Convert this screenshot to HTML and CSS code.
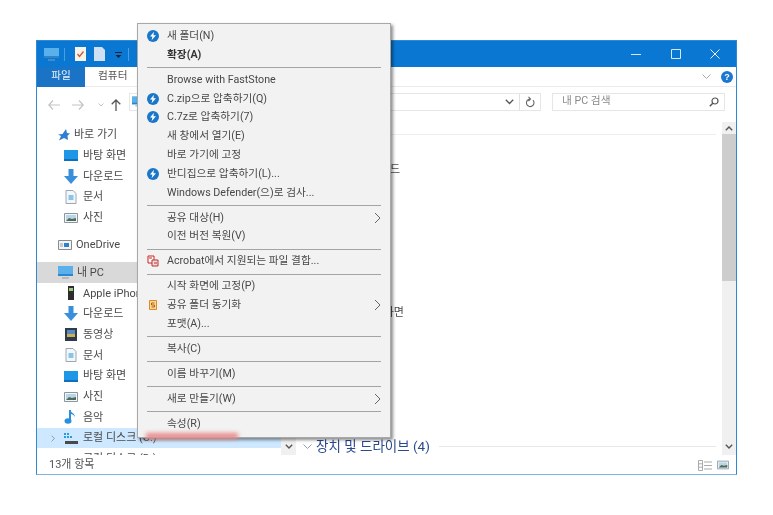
FILE: index.html
```html
<!DOCTYPE html>
<html lang="ko">
<head>
<meta charset="utf-8">
<title>내 PC</title>
<link rel="stylesheet" href="styles.css">
</head>
<body>
<svg class="defs" width="0" height="0">
  <symbol id="bz" viewBox="0 0 12 12"><circle cx="6" cy="6" r="6" fill="#1976c9"/><path d="M7 1.800 3 6.600h2.400L4.600 10.200 9 5.200H6.400z" fill="#fff"/></symbol>
  <symbol id="monitor" viewBox="0 0 15 13"><path d="M0 0h15v10H0z" fill="#5ab0ea"/><path d="M0 8h15v2H0z" fill="#2b86cf"/><path d="M4 11.500h7v1H4z" fill="#8a9aa8"/></symbol>
  <symbol id="desktop" viewBox="0 0 14 11"><path d="M0 0h14v11H0z" fill="#1f97e6"/><path d="M0 9h14v2H0z" fill="#0f6fb8"/></symbol>
  <symbol id="down" viewBox="0 0 14 15"><path d="M4.500 0h5v7H14l-7 8-7-8h4.500z" fill="#3a8fdc"/></symbol>
  <symbol id="doc" viewBox="0 0 11 14"><path d="M.5.500h7l3 3v10H.5z" fill="#f4f7fa" stroke="#9aa8b4"/><path d="M3 5h5v5H3z" fill="#8cc4e8"/></symbol>
  <symbol id="pic" viewBox="0 0 14 10"><path d="M.5.500h13v9H.500z" fill="#f6f6f6" stroke="#8a97a3"/><path d="M2 2h10v6H2z" fill="#b9d5e8"/><path d="M2 8l3-3 3 1 4-1v3z" fill="#4d6b57"/></symbol>
  <symbol id="chev" viewBox="0 0 7 12"><path d="M1 1l5 5-5 5" fill="none" stroke="#666" stroke-width="1"/></symbol>
</svg>

<div class="window">
  <header class="titlebar">
    <svg class="tb-mon" width="15" height="13"><use href="#monitor"/></svg>
    <span class="tb-sep"></span>
    <svg class="tb-doc" width="11" height="14" viewBox="0 0 11 14"><path d="M0 0h11v14H0z" fill="#f7f3ea"/><path d="M2.500 7l2 2.500 4-5" fill="none" stroke="#d2552b" stroke-width="1.300"/></svg>
    <svg class="tb-doc" width="11" height="14" viewBox="0 0 11 14"><path d="M0 0h8l3 3v11H0z" fill="#cfe0f2"/></svg>
    <svg class="tb-drop" width="7" height="6" viewBox="0 0 7 6"><path d="M0 0h7v1H0zM.5 3h6L3.500 6z" fill="#10233a"/></svg>
    <span class="tb-sep"></span>
    <span class="tb-title">내 PC</span>
    <div class="win-btns">
      <svg width="10" height="10" viewBox="0 0 10 10"><path d="M0 5.500h10" stroke="#d6e8f6"/></svg>
      <svg width="10" height="10" viewBox="0 0 10 10"><path d="M.5.500h9v9h-9z" fill="none" stroke="#d6e8f6"/></svg>
      <svg width="10" height="10" viewBox="0 0 10 10"><path d="M.5.500l9 9M9.500.500l-9 9" stroke="#e6f1fa"/></svg>
    </div>
  </header>

  <nav class="tabs">
    <span class="tab-file">파일</span>
    <span class="tab">컴퓨터</span>
    <span class="tabs-end">
      <svg width="9" height="5" viewBox="0 0 9 5"><path d="M.5.500l4 4 4-4" fill="none" stroke="#a8a8a8"/></svg>
      <span class="help">?</span>
    </span>
  </nav>

  <div class="addressbar">
    <svg class="nav-arrow" width="12" height="10" viewBox="0 0 12 10"><path d="M5 .500.8 5 5 9.500M1 5h11" fill="none" stroke="#c4c4c4" stroke-width="1.200"/></svg>
    <svg class="nav-arrow" width="12" height="10" viewBox="0 0 12 10"><path d="M7 .500 11.200 5 7 9.500M11 5H0" fill="none" stroke="#c4c4c4" stroke-width="1.200"/></svg>
    <svg class="nav-mini" width="6" height="4" viewBox="0 0 6 4"><path d="M.5.500l2.500 2.500L5.500.500" fill="none" stroke="#c4c4c4"/></svg>
    <svg class="nav-up" width="10" height="12" viewBox="0 0 10 12"><path d="M.7 5.300 5 1l4.300 4.300M5 1v11" fill="none" stroke="#555" stroke-width="1.300"/></svg>
    <div class="addr">
      <svg width="12" height="11"><use href="#monitor"/></svg>
      <span class="addr-grow"></span>
      <svg width="9" height="6" viewBox="0 0 9 6"><path d="M.8.800l3.700 3.700L8.200.800" fill="none" stroke="#555" stroke-width="1.300"/></svg>
      <span class="addr-div"></span>
      <svg width="10" height="12" viewBox="0 0 10 12"><path d="M8 4.200a3.800 3.800 0 1 1-3-1.200M3.500 .800 5.500 3 3.500 5" fill="none" stroke="#666" stroke-width="1.100"/></svg>
    </div>
    <div class="search">
      <span>내 PC 검색</span>
      <svg width="10" height="10" viewBox="0 0 10 10"><circle cx="6" cy="4" r="3" fill="none" stroke="#555" stroke-width="1.200"/><path d="M3.800 6.200.8 9.200" stroke="#555" stroke-width="1.500"/></svg>
    </div>
  </div>

  <main class="main">
    <aside class="nav">
      <div class="tree">
        <div class="group">
          <div class="row lv0"><svg width="12" height="12" viewBox="0 0 12 12"><path d="M8 0l1 4 3 .500-2.500 2.300L10 11 6 9 1 11.500l2-4.500L0 5.500l4.500-.500z" fill="#2f7fd0"/></svg>바로 가기</div>
          <div class="row"><svg width="14" height="11"><use href="#desktop"/></svg>바탕 화면</div>
          <div class="row"><svg width="14" height="15"><use href="#down"/></svg>다운로드</div>
          <div class="row"><svg width="14" height="14"><use href="#doc"/></svg>문서</div>
          <div class="row"><svg width="14" height="10"><use href="#pic"/></svg>사진</div>
        </div>
        <div class="group">
          <div class="row lv0"><svg width="14" height="10" viewBox="0 0 14 10"><path d="M.5.500h13v9H.5z" fill="#f4f4f4" stroke="#8a8a8a"/><path d="M6 3h5v4H6z" fill="#2f7fd0"/><path d="M2 3h3v4H2z" fill="#bcd"/></svg>OneDrive</div>
        </div>
        <div class="group">
          <div class="row lv0 selected"><svg width="15" height="13"><use href="#monitor"/></svg>내 PC</div>
          <div class="row"><svg width="14" height="14" viewBox="0 0 14 14"><path d="M4 0h6v14H4z" fill="#2d2d2d"/><path d="M5 2h4v3H5z" fill="#9acb7a"/></svg>Apple iPhone</div>
          <div class="row"><svg width="14" height="15"><use href="#down"/></svg>다운로드</div>
          <div class="row"><svg width="14" height="13" viewBox="0 0 14 13"><path d="M1 0h12v13H1z" fill="#2f3a4a"/><path d="M3 2h8v7H3z" fill="#5b8ac0"/><path d="M3 6h8v3H3z" fill="#c9b25a"/></svg>동영상</div>
          <div class="row"><svg width="14" height="14"><use href="#doc"/></svg>문서</div>
          <div class="row"><svg width="14" height="11"><use href="#desktop"/></svg>바탕 화면</div>
          <div class="row"><svg width="14" height="10"><use href="#pic"/></svg>사진</div>
          <div class="row"><svg width="14" height="16" viewBox="0 0 14 16"><path d="M6 1v10.500" stroke="#2b8fdc" stroke-width="2"/><path d="M6 1c1 3 5 3 5 7-1-2-3-3-4-3z" fill="#2b8fdc"/><ellipse cx="4" cy="12" rx="3.500" ry="2.800" fill="#2b8fdc"/></svg>음악</div>
          <div class="row drive"><span class="expander"><svg width="4" height="7" viewBox="0 0 7 12"><use href="#chev"/></svg></span><svg width="14" height="12" viewBox="0 0 14 12"><path d="M1 9h13v3H1z" fill="#4a4a4a"/><path d="M0 1h2v2H0zM3 1h2v2H3zM0 4h2v2H0zM3 4h2v2H3zM6 4h2v2H6z" fill="#2b9be0"/></svg>로컬 디스크 (C:)</div>
          <div class="row"><svg width="14" height="12" viewBox="0 0 14 12"><path d="M0 8h14v4H0z" fill="#4a4a4a"/></svg>로컬 디스크 (D:)</div>
        </div>
      </div>
      <div class="nav-scroll">
        <svg width="8" height="5" viewBox="0 0 8 5"><path d="M.8.800 4 4 7.200.800" fill="none" stroke="#555" stroke-width="1.400"/></svg>
      </div>
    </aside>

    <section class="content">
      <div class="col-head"></div>
      <div class="tiles">
        <div class="tile tile-a">다운로드</div>
        <div class="tile tile-b">바탕 화면</div>
      </div>
      <div class="section-head">
        <svg width="9" height="5" viewBox="0 0 9 5"><path d="M.5.500l4 4 4-4" fill="none" stroke="#8d9db5"/></svg>
        <span>장치 및 드라이브 (4)</span>
        <i class="rule"></i>
      </div>
    </section>

    <div class="vscroll">
      <svg class="vs-btn" width="8" height="5" viewBox="0 0 8 5"><path d="M.8 4.200 4 1l3.200 3.200" fill="none" stroke="#555" stroke-width="1.400"/></svg>
      <div class="thumb"></div>
      <span class="vs-grow"></span>
      <svg class="vs-btn" width="8" height="5" viewBox="0 0 8 5"><path d="M.8.800 4 4 7.200.800" fill="none" stroke="#555" stroke-width="1.400"/></svg>
    </div>
  </main>

  <footer class="status">
    <span>13개 항목</span>
    <span class="view-btns">
      <svg width="14" height="11" viewBox="0 0 14 11"><path d="M.5.500h4v10h-4zM.5 3.800h4M.5 7.200h4" fill="none" stroke="#aaa"/><path d="M6 2h8M6 5.500h8M6 9h8" stroke="#aaa"/></svg>
      <svg class="view-on" width="12" height="10"><use href="#pic"/></svg>
    </span>
  </footer>
</div>

<div class="menu">
  <div class="mi"><svg width="12" height="12"><use href="#bz"/></svg><span>새 폴더(N)</span></div>
  <div class="mi strong"><span>확장(A)</span></div>
  <hr>
  <div class="mi"><span>Browse with FastStone</span></div>
  <div class="mi"><svg width="12" height="12"><use href="#bz"/></svg><span>C.zip으로 압축하기(Q)</span></div>
  <div class="mi"><svg width="12" height="12"><use href="#bz"/></svg><span>C.7z로 압축하기(7)</span></div>
  <div class="mi"><span>새 창에서 열기(E)</span></div>
  <div class="mi"><span>바로 가기에 고정</span></div>
  <div class="mi"><svg width="12" height="12"><use href="#bz"/></svg><span>반디집으로 압축하기(L)...</span></div>
  <div class="mi"><span>Windows Defender(으)로 검사...</span></div>
  <hr>
  <div class="mi"><span>공유 대상(H)</span><svg class="sub" width="7" height="12"><use href="#chev"/></svg></div>
  <div class="mi"><span>이전 버전 복원(V)</span></div>
  <hr>
  <div class="mi"><svg width="12" height="12" viewBox="0 0 12 12"><path d="M1 1h6v7H1z" fill="#fff" stroke="#c22"/><path d="M5 5h6v6H5z" fill="#f0dede" stroke="#b33"/><path d="M2 3h3M7 8h3" stroke="#c22"/></svg><span>Acrobat에서 지원되는 파일 결합...</span></div>
  <hr>
  <div class="mi"><span>시작 화면에 고정(P)</span></div>
  <div class="mi"><svg width="12" height="12" viewBox="0 0 12 12"><path d="M2.500 1.500h7v9h-7z" fill="#f7d9a8" stroke="#e08a1e"/><path d="M7.500 4H4.500v2h3v2h-3" fill="none" stroke="#b85f00"/></svg><span>공유 폴더 동기화</span><svg class="sub" width="7" height="12"><use href="#chev"/></svg></div>
  <div class="mi"><span>포맷(A)...</span></div>
  <hr>
  <div class="mi"><span>복사(C)</span></div>
  <hr>
  <div class="mi"><span>이름 바꾸기(M)</span></div>
  <hr>
  <div class="mi"><span>새로 만들기(W)</span><svg class="sub" width="7" height="12"><use href="#chev"/></svg></div>
  <hr>
  <div class="mi"><span>속성(R)</span></div>
  <div class="smear"></div>
</div>
</body>
</html>
```
FILE: styles.css
```css
* { box-sizing: border-box; }
html, body { margin: 0; height: 100%; background: #fff; }
body {
  position: relative;
  overflow: hidden;
  font: 10.700px/1.2 Roboto, "Noto Sans CJK KR", sans-serif;
  color: #4a4a4a;
  filter: blur(0.3px);
}
.defs { position: absolute; }
svg { display: block; flex: none; }

.window {
  width: 701px;
  height: 435px;
  margin: 40px 0 0 36px;
  display: flex;
  flex-direction: column;
  border: 1px solid #2f8ad6;
  border-bottom-color: #7fb2dc;
  background: #fff;
}

.titlebar {
  height: 26px;
  background: #0a78d2;
  display: flex;
  align-items: center;
  padding-left: 7px;
  flex: none;
}
.tb-mon { margin-right: 5px; }
.tb-sep { width: 1px; height: 13px; background: #4d9ee0; margin-right: 10px; }
.tb-doc { margin-right: 8px; }
.tb-drop { margin: 2px 6px 0 2px; }
.tb-title { color: #d6e8f6; font-size: 10px; }
.win-btns { margin-left: auto; display: flex; gap: 29.500px; padding-right: 16px; }

.tabs {
  height: 20px;
  display: flex;
  align-items: center;
  flex: none;
  border-bottom: 1px solid #eaeaea;
}
.tab-file {
  width: 48px;
  height: 20px;
  background: #1a73c4;
  color: #e8f2fa;
  display: flex;
  align-items: center;
  justify-content: center;
}
.tab { margin-left: 13px; color: #555; }
.tabs-end { margin-left: auto; display: flex; align-items: center; gap: 10px; padding-right: 3px; }
.help {
  width: 12px;
  height: 12px;
  border-radius: 50%;
  background: #1a78d0;
  color: #fff;
  font: bold 9px/12px "Liberation Sans", sans-serif;
  text-align: center;
}

.addressbar {
  height: 35px;
  display: flex;
  align-items: center;
  padding: 0 11px 0 11px;
  flex: none;
}
.nav-arrow { margin-right: 12px; }
.nav-mini { margin: 0 7px 0 2px; }
.nav-up { margin-right: 8px; }
.addr {
  width: 412px;
  height: 18px;
  margin: -6px 11px 0 0;
  padding: 0 5px 0 2px;
  border: 1px solid #e6e6e6;
  display: flex;
  align-items: center;
}
.addr-grow { flex: 1; }
.addr-div { width: 1px; height: 16px; background: #e0e0e0; margin: 0 5px; }
.search {
  width: 173px;
  height: 18px;
  margin-top: -6px;
  padding: 0 5px 0 9px;
  border: 1px solid #e6e6e6;
  display: flex;
  align-items: center;
  justify-content: space-between;
  color: #8a8a8a;
}

.main { flex: 1; min-height: 0; display: flex; overflow: hidden; }

.nav { width: 259px; flex: none; display: flex; overflow: hidden; }
.tree { width: 244px; flex: none; padding-top: 2.500px; font-size: 11px; }
.group + .group { margin-top: 6.800px; }
.row {
  height: 20.700px;
  display: flex;
  align-items: center;
  gap: 5px;
  padding-left: 27px;
  white-space: nowrap;
}
.row.lv0 { padding-left: 21px; gap: 4px; }
.row.selected { background: #d9d9d9; }
.row.drive { background: #cde8ff; position: relative; }
.expander { position: absolute; left: 14px; top: 7px; }
.nav-scroll {
  width: 15px;
  display: flex;
  align-items: flex-end;
  justify-content: center;
  padding-bottom: 6px;
  background: #f0f0f0;
}

.content { flex: 1; min-width: 0; display: flex; flex-direction: column; padding-right: 6px; }
.col-head { height: 13px; border-bottom: 1px solid #eee; flex: none; }
.tiles { flex: 1; font-size: 11px; }
.tile { width: 104px; text-align: right; }
.tile-a { margin-top: 28px; }
.tile-b { margin-top: 130px; width: 108px; }
.section-head {
  display: flex;
  align-items: center;
  height: 18px;
  padding-left: 7px;
  color: #2a4a8e;
  font-size: 13.500px;
  gap: 4px;
  flex: none;
}
.rule { flex: 1; height: 1px; background: #e8e8e8; margin-left: 5px; }

.vscroll {
  width: 14px;
  flex: none;
  background: #f0f0f0;
  display: flex;
  flex-direction: column;
  align-items: center;
}
.vs-btn { margin: 4px 0 6px; }
.thumb { width: 14px; height: 147px; background: #cdcdcd; margin-top: -3px; }
.vs-grow { flex: 1; }

.status {
  height: 19px;
  flex: none;
  display: flex;
  align-items: center;
  justify-content: space-between;
  padding: 1px 7px 0 12px;
  font-size: 11px;
  color: #555;
}
.view-btns { display: flex; align-items: center; gap: 5px; }

.menu {
  position: absolute;
  left: 137px;
  top: 23px;
  width: 254px;
  height: 415px;
  padding: 3px 9px 0 9px;
  background: #f2f2f2;
  border: 1px solid #a8a8a8;
  box-shadow: 2px 2px 3px rgba(0, 0, 0, 0.45);
  color: #484848;
}
.mi {
  height: 18.800px;
  display: flex;
  align-items: center;
  position: relative;
  padding-left: 20px;
}
.mi > svg:first-child { position: absolute; left: 0; top: 3px; }
.mi .sub { position: absolute; right: 0; top: 3px; }
.mi.strong { font-weight: 700; color: #333; }
.menu hr {
  height: 1px;
  margin: 2.700px 0 2.500px;
  border: 0;
  background: #a4a4a4;
}
.smear {
  position: absolute;
  left: 8px;
  bottom: -2px;
  width: 92px;
  height: 6px;
  background: #e88a8a;
  filter: blur(2px);
}
```
